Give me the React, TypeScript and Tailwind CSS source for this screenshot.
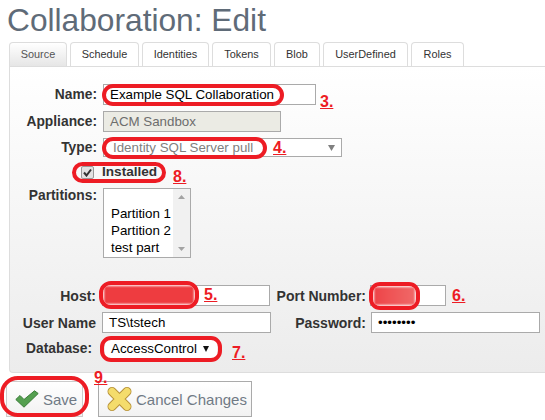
import React from "react";

const F = "font-['Liberation_Sans',Arial,sans-serif]";

function Tab({ label, active, w }: { label: string; active?: boolean; w: string }) {
  return (
    <div
      className={`${w} h-[24px] flex items-center justify-center border border-b-0 border-[#ddd] rounded-t-[4px] text-[10.9px] ${
        active ? "bg-gradient-to-b from-white to-[#e6e6e6] text-[#555]" : "bg-white text-[#333]"
      }`}
    >
      {label}
    </div>
  );
}

function Label({ children, w, size = "text-[13.8px]" }: { children: React.ReactNode; w: string; size?: string }) {
  return <div className={`${w} text-right font-bold ${size} text-[#333] shrink-0 leading-[16px]`}>{children}</div>;
}

function Note({ n, cls }: { n: string; cls: string }) {
  return <span className={`absolute ${cls} text-[16px] font-bold underline text-[#ed1c24] leading-[18px]`}>{n}</span>;
}

function Ring({ cls, children }: { cls: string; children?: React.ReactNode }) {
  return <div className={`absolute ${cls} border-[4px] border-[#ed1c24] rounded-[11px] pointer-events-none overflow-hidden`}>{children}</div>;
}

const inputCls = "border border-[#aaa] bg-white text-[13.33px] text-black px-[6px] h-[21px] flex items-center leading-none";

export default function App() {
  return (
    <div className={`${F} relative w-[545px] h-[420px] overflow-hidden bg-white`}>
      <h1 className="pl-[7px] pt-[2px] h-[42px] text-[31.7px] leading-[36px] text-[#5f6b78] font-normal">Collaboration: Edit</h1>

      <div className="flex gap-[3px] pl-[9px] h-[24px]">
        <Tab label="Source" active w="w-[58px]" />
        <Tab label="Schedule" w="w-[69px]" />
        <Tab label="Identities" w="w-[67px]" />
        <Tab label="Tokens" w="w-[59px]" />
        <Tab label="Blob" w="w-[46px]" />
        <Tab label="UserDefined" w="w-[85px]" />
        <Tab label="Roles" w="w-[53px]" />
      </div>

      <div className="ml-[9px] h-[307px] border-t border-b border-l border-[#ddd] rounded-bl-[4px] bg-gradient-to-b from-white to-[#ececec] pt-[17px] flex flex-col">
        <div className="flex items-center gap-[6px] h-[21px]">
          <Label w="w-[87px]">Name:</Label>
          <div className={`${inputCls} w-[213px]`}>Example SQL Collaboration</div>
        </div>
        <div className="flex items-center gap-[6px] h-[21px] mt-[6px]">
          <Label w="w-[87px]">Appliance:</Label>
          <div className={`${inputCls} w-[178px] !bg-[#ebebe4] !text-[#6d6d6d]`}>ACM Sandbox</div>
        </div>
        <div className="flex items-center gap-[6px] h-[19px] mt-[6px]">
          <Label w="w-[87px]">Type:</Label>
          <div className="w-[239px] h-[19px] border border-[#aaa] bg-white text-[13.33px] text-[#808080] pl-[9px] pr-[6px] flex items-center justify-between">
            <span>Identity SQL Server pull</span>
            <svg width="7" height="6" viewBox="0 0 7 6"><path d="M0 0h7L3.5 6z" fill="#808080" /></svg>
          </div>
        </div>
        <div className="flex items-center gap-[8px] h-[16px] mt-[7px] pl-[71px]">
          <div className="w-[13px] h-[13px] border border-[#999] rounded-[2px] bg-[#e2e2e2] flex items-center justify-center">
            <svg width="9" height="9" viewBox="0 0 9 9"><path d="M1 4.5L3.5 7.5L8 1.5" fill="none" stroke="#333" strokeWidth="2" /></svg>
          </div>
          <span className="font-bold text-[13.6px] text-[#333]">Installed</span>
        </div>
        <div className="flex gap-[6px] mt-[8px] h-[70px]">
          <Label w="w-[87px]">Partitions:</Label>
          <div className="w-[88px] h-[70px] border border-[#aaa] bg-white flex">
            <div className="flex-1 pt-[16px] pl-[7px] text-[13.33px] leading-[17px] text-black whitespace-nowrap">
              <div>Partition 1</div>
              <div>Partition 2</div>
              <div>test part</div>
            </div>
            <div className="w-[17px] bg-[#f1f1f1] flex flex-col items-center justify-between py-[6px]">
              <svg width="7" height="4" viewBox="0 0 7 4"><path d="M0 4L3.5 0L7 4z" fill="#a3a3a3" /></svg>
              <svg width="7" height="4" viewBox="0 0 7 4"><path d="M0 0L3.5 4L7 0z" fill="#a3a3a3" /></svg>
            </div>
          </div>
        </div>
        <div className="flex items-center h-[21px] mt-[27px]">
          <Label w="w-[86px]" size="text-[14px]">Host:</Label>
          <div className={`${inputCls} w-[168px] ml-[6px]`} />
          <Label w="w-[96px]" size="text-[14px]">Port Number:</Label>
          <div className={`${inputCls} w-[76px] ml-[4px]`} />
        </div>
        <div className="flex items-center h-[21px] mt-[6px]">
          <Label w="w-[86px]" size="text-[14px]">User Name</Label>
          <div className={`${inputCls} w-[169px] ml-[6px]`}>TS\tstech</div>
          <Label w="w-[95px]" size="text-[14px]">Password:</Label>
          <div className={`${inputCls} w-[169px] ml-[5px]`}>••••••••</div>
        </div>
        <div className="flex items-center h-[19px] mt-[6px]">
          <Label w="w-[82px]">Database:</Label>
          <div className="ml-[13px] h-[19px] w-[112px] bg-white text-[13.33px] text-black pl-[6px] flex items-center gap-[6px]">
            <span>AccessControl</span>
            <svg width="6" height="6" viewBox="0 0 6 6"><path d="M0 0h6L3 6z" fill="#111" /></svg>
          </div>
        </div>
      </div>

      <div className="flex items-start pl-[6px] pt-[8px] gap-[15px]">
        <div className="w-[77px] h-[36px] border border-[#ccc] bg-gradient-to-b from-white to-[#f2f2f2] flex items-center pl-[8px] gap-[4px] text-[15px] text-[#707a85]">
          <svg width="24" height="18" viewBox="0 0 24 18">
            <path d="M0.8 9.5L5 5.5L9 9.5L19.5 0.8L23.2 3.5L9 17.2z" fill="#55a050" stroke="#3c7d3a" strokeWidth="1" strokeLinejoin="round" />
          </svg>
          <span className="pt-[2px]">Save</span>
        </div>
        <div className="w-[154px] h-[36px] border border-[#aaa] bg-gradient-to-b from-white to-[#f2f2f2] flex items-center pl-[8px] gap-[4px] text-[15px] text-[#707a85] whitespace-nowrap">
          <svg width="25" height="24" viewBox="0 0 25 24">
            <path d="M5 4.5L20 19.5M20 4.5L5 19.5" fill="none" stroke="#b8923a" strokeWidth="9" strokeLinecap="round" />
            <path d="M5 4.5L20 19.5M20 4.5L5 19.5" fill="none" stroke="#f4dc6c" strokeWidth="7" strokeLinecap="round" />
          </svg>
          <span className="pt-[2px]">Cancel Changes</span>
        </div>
      </div>

      <Ring cls="left-[102px] top-[84px] w-[182px] h-[22px]" />
      <Ring cls="left-[102px] top-[137px] w-[165px] h-[22px]" />
      <Ring cls="left-[72px] top-[162px] w-[94px] h-[21px]" />
      <Ring cls="left-[99px] top-[281px] w-[100px] h-[28px] bg-white !rounded-[12px]">
        <div className="absolute inset-[1px] bg-[#ee3c40] blur-[1px]" />
      </Ring>
      <Ring cls="left-[369px] top-[282px] w-[51px] h-[28px] bg-white">
        <div className="absolute inset-[1px] bg-gradient-to-r from-[#ee4448] to-[#f06868] blur-[1px]" />
      </Ring>
      <Ring cls="left-[100px] top-[336px] w-[122px] h-[26px]" />
      <div className="absolute left-[0px] top-[376px] w-[89px] h-[41px] border-[4px] border-[#ed1c24] rounded-[18px] pointer-events-none" />

      <Note n="3." cls="left-[320px] top-[93px]" />
      <Note n="4." cls="left-[273px] top-[139px]" />
      <Note n="8." cls="left-[173px] top-[168px]" />
      <Note n="5." cls="left-[204px] top-[286px]" />
      <Note n="6." cls="left-[452px] top-[287px]" />
      <Note n="7." cls="left-[232px] top-[344px]" />
      <Note n="9." cls="left-[94px] top-[369px]" />
    </div>
  );
}
